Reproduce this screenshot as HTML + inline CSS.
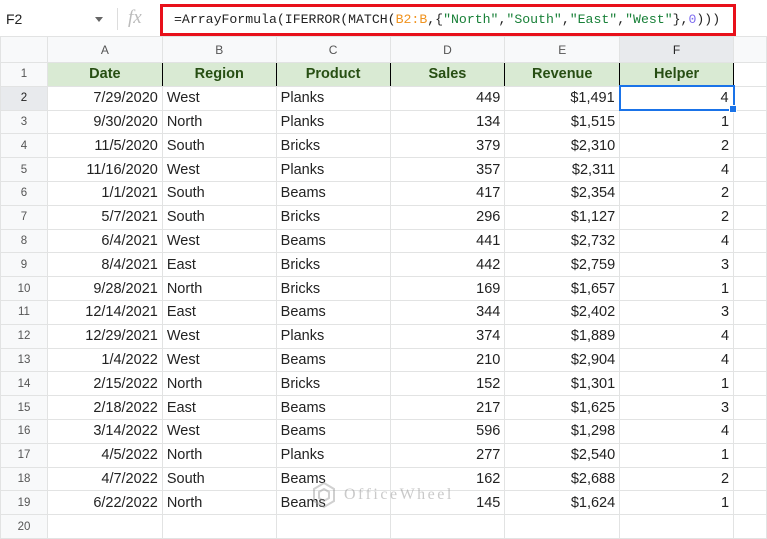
<!DOCTYPE html>
<html><head><meta charset="utf-8"><style>
body{margin:0;width:767px;height:535px;overflow:hidden;background:#fff;font-family:"Liberation Sans",Arial,sans-serif;position:relative}
.fb{position:absolute;left:0;top:0;width:767px;height:36px;background:#fff;border-bottom:1px solid #e2e3e3}
.nb{position:absolute;left:6px;top:11px;font-size:14px;color:#222}
.arr{position:absolute;left:95px;top:17px;width:0;height:0;border-left:4px solid transparent;border-right:4px solid transparent;border-top:5px solid #666}
.sep{position:absolute;left:117px;top:8px;width:1px;height:22px;background:#ddd}
.fx{position:absolute;left:128px;top:7px;font-family:"Liberation Serif",serif;font-style:italic;font-size:19px;color:#bbb}
.red{position:absolute;left:160px;top:4px;width:570px;height:26px;border:3px solid #e8101a;box-sizing:content-box}
.f{position:absolute;left:174px;top:12px;font-family:"Liberation Mono",monospace;font-size:13.2px;color:#222;white-space:nowrap}
.o{color:#f0931f}.g{color:#188038}.p{color:#7e6cf0}
table{position:absolute;left:0;top:36px;border-collapse:collapse;table-layout:fixed}
tr{height:23.8px}
td{border:1px solid #e2e3e3;padding:0 4px;font-size:14.5px;color:#222;white-space:nowrap;overflow:hidden;box-sizing:border-box}
tr.ch{height:26px}
tr.ch td{background:#f8f9fa;color:#555;font-size:12px;text-align:center}
td.rh{background:#f8f9fa;color:#555;font-size:11.5px;text-align:center}
tr.h td.d{background:#d9ead3;color:#274e13;font-weight:bold;text-align:center;border-left-color:#000;border-right-color:#000}
td.r{text-align:right}
.sel{background:#e8eaed!important;color:#222!important}
.wm{position:absolute;left:344px;top:486px;font-family:"Liberation Serif",serif;font-size:16px;letter-spacing:2.5px;color:rgba(150,150,150,.5)}
</style></head><body>
<div class="fb"><span class="nb">F2</span><span class="arr"></span><span class="sep"></span><span class="fx">fx</span>
<div class="red"></div>
<div class="f">=ArrayFormula(IFERROR(MATCH(<span class="o">B2:B</span>,{<span class="g">"North"</span>,<span class="g">"South"</span>,<span class="g">"East"</span>,<span class="g">"West"</span>},<span class="p">0</span>)))</div></div>
<table>
<colgroup><col style="width:47px"><col style="width:115px"><col style="width:114px"><col style="width:114px"><col style="width:115px"><col style="width:115px"><col style="width:114px"><col style="width:33px"></colgroup>
<tr class="ch"><td></td><td>A</td><td>B</td><td>C</td><td>D</td><td>E</td><td class="sel">F</td><td></td></tr>
<tr class="h"><td class="rh">1</td><td class="d">Date</td><td class="d">Region</td><td class="d">Product</td><td class="d">Sales</td><td class="d">Revenue</td><td class="d">Helper</td><td></td></tr>
<tr><td class="rh sel">2</td><td class="r">7/29/2020</td><td>West</td><td>Planks</td><td class="r">449</td><td class="r">$1,491</td><td class="r" style="border:2px solid #1a73e8">4</td><td></td></tr>
<tr><td class="rh">3</td><td class="r">9/30/2020</td><td>North</td><td>Planks</td><td class="r">134</td><td class="r">$1,515</td><td class="r">1</td><td></td></tr>
<tr><td class="rh">4</td><td class="r">11/5/2020</td><td>South</td><td>Bricks</td><td class="r">379</td><td class="r">$2,310</td><td class="r">2</td><td></td></tr>
<tr><td class="rh">5</td><td class="r">11/16/2020</td><td>West</td><td>Planks</td><td class="r">357</td><td class="r">$2,311</td><td class="r">4</td><td></td></tr>
<tr><td class="rh">6</td><td class="r">1/1/2021</td><td>South</td><td>Beams</td><td class="r">417</td><td class="r">$2,354</td><td class="r">2</td><td></td></tr>
<tr><td class="rh">7</td><td class="r">5/7/2021</td><td>South</td><td>Bricks</td><td class="r">296</td><td class="r">$1,127</td><td class="r">2</td><td></td></tr>
<tr><td class="rh">8</td><td class="r">6/4/2021</td><td>West</td><td>Beams</td><td class="r">441</td><td class="r">$2,732</td><td class="r">4</td><td></td></tr>
<tr><td class="rh">9</td><td class="r">8/4/2021</td><td>East</td><td>Bricks</td><td class="r">442</td><td class="r">$2,759</td><td class="r">3</td><td></td></tr>
<tr><td class="rh">10</td><td class="r">9/28/2021</td><td>North</td><td>Bricks</td><td class="r">169</td><td class="r">$1,657</td><td class="r">1</td><td></td></tr>
<tr><td class="rh">11</td><td class="r">12/14/2021</td><td>East</td><td>Beams</td><td class="r">344</td><td class="r">$2,402</td><td class="r">3</td><td></td></tr>
<tr><td class="rh">12</td><td class="r">12/29/2021</td><td>West</td><td>Planks</td><td class="r">374</td><td class="r">$1,889</td><td class="r">4</td><td></td></tr>
<tr><td class="rh">13</td><td class="r">1/4/2022</td><td>West</td><td>Beams</td><td class="r">210</td><td class="r">$2,904</td><td class="r">4</td><td></td></tr>
<tr><td class="rh">14</td><td class="r">2/15/2022</td><td>North</td><td>Bricks</td><td class="r">152</td><td class="r">$1,301</td><td class="r">1</td><td></td></tr>
<tr><td class="rh">15</td><td class="r">2/18/2022</td><td>East</td><td>Beams</td><td class="r">217</td><td class="r">$1,625</td><td class="r">3</td><td></td></tr>
<tr><td class="rh">16</td><td class="r">3/14/2022</td><td>West</td><td>Beams</td><td class="r">596</td><td class="r">$1,298</td><td class="r">4</td><td></td></tr>
<tr><td class="rh">17</td><td class="r">4/5/2022</td><td>North</td><td>Planks</td><td class="r">277</td><td class="r">$2,540</td><td class="r">1</td><td></td></tr>
<tr><td class="rh">18</td><td class="r">4/7/2022</td><td>South</td><td>Beams</td><td class="r">162</td><td class="r">$2,688</td><td class="r">2</td><td></td></tr>
<tr><td class="rh">19</td><td class="r">6/22/2022</td><td>North</td><td>Beams</td><td class="r">145</td><td class="r">$1,624</td><td class="r">1</td><td></td></tr>
<tr><td class="rh">20</td><td></td><td></td><td></td><td></td><td></td><td></td><td></td></tr>
</table>
<div style="position:absolute;left:729px;top:105px;width:6px;height:6px;background:#1a73e8;border:1px solid #fff"></div>
<svg style="position:absolute;left:311px;top:481px" width="26" height="28" viewBox="0 0 26 28"><path d="M13 2 L23 8 L23 20 L13 26 L3 20 L3 8 Z M13 8 L18 11 L18 17 L13 20 L8 17 L8 11 Z" fill="none" stroke="rgba(150,150,150,.45)" stroke-width="2"/></svg>
<div class="wm">OfficeWheel</div>
</body></html>
